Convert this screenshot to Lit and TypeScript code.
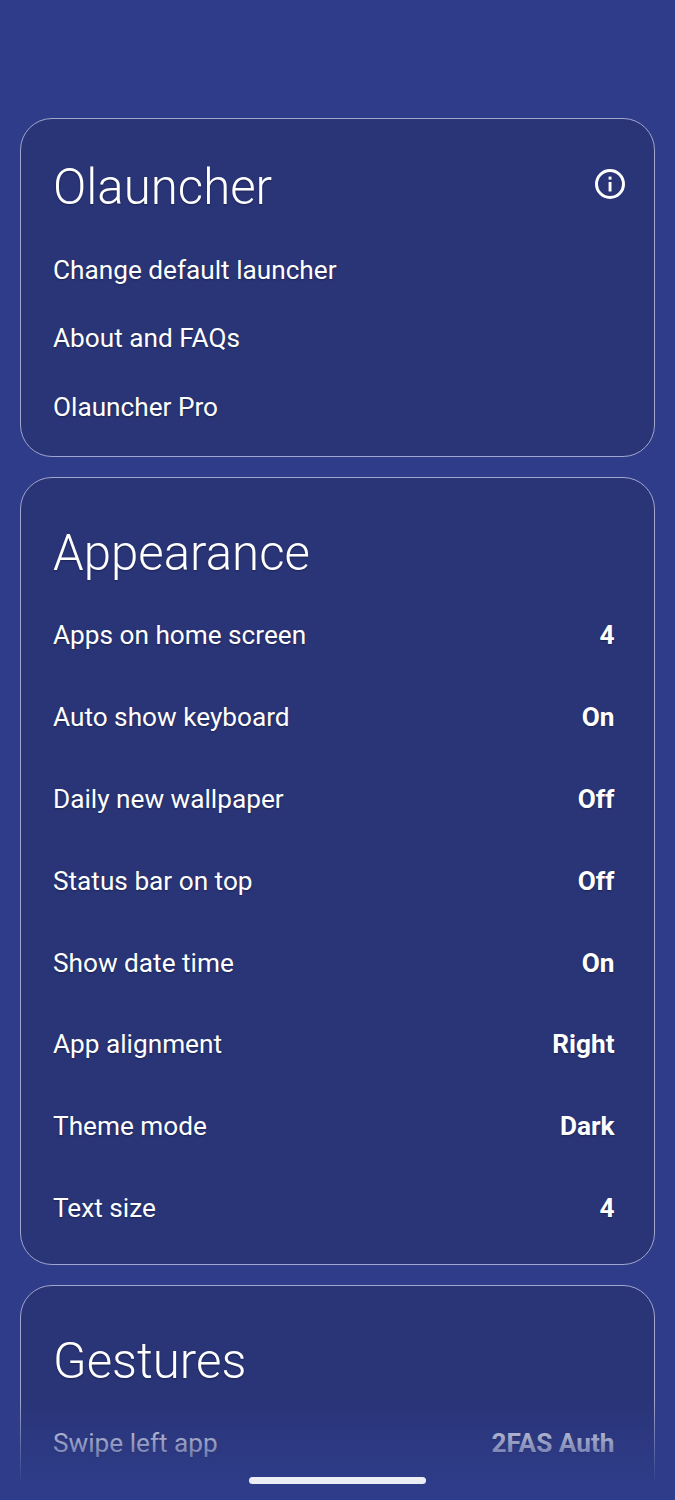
import { LitElement, html, css } from "lit";
import { customElement } from "lit/decorators.js";

const appearance: [string, string][] = [
  ["Apps on home screen", "4"],
  ["Auto show keyboard", "On"],
  ["Daily new wallpaper", "Off"],
  ["Status bar on top", "Off"],
  ["Show date time", "On"],
  ["App alignment", "Right"],
  ["Theme mode", "Dark"],
  ["Text size", "4"],
];

@customElement("app-root")
export class AppRoot extends LitElement {
  static styles = css`
    :host {
      display: block;
      position: relative;
      width: 675px;
      height: 1500px;
      overflow: hidden;
      background: #2e3c89;
      font-family: Roboto, "Liberation Sans", sans-serif;
      color: #fff;
      --shadow: 0 1px 2px rgba(0, 0, 0, 0.35);
    }
    .page {
      display: flex;
      flex-direction: column;
      gap: 20px;
      padding: 118px 20px 0;
    }
    .card {
      box-sizing: border-box;
      border: 1.5px solid #a0a6ce;
      border-radius: 32px;
      background: #2a3578;
      padding: 0 39.5px 0 32px;
      text-shadow: var(--shadow);
    }
    .card.first { height: 339px; }
    .card.second { height: 788px; }
    .card.third { height: 300px; }
    .head {
      display: flex;
      justify-content: space-between;
      align-items: flex-start;
      box-sizing: border-box;
      height: 135.6px;
      padding-top: 40px;
    }
    .second .head, .third .head { padding-top: 47px; height: 142.2px; }
    h1 {
      margin: 0;
      font-weight: 300;
      font-size: 49.2px;
      line-height: 56px;
    }
    svg { margin: 9px -11px 0 0; display: block; }
    .links { display: flex; flex-direction: column; }
    .link {
      font-size: 26.2px;
      line-height: 30px;
      height: 68.6px;
    }
    .row {
      display: flex;
      justify-content: space-between;
      font-size: 26.2px;
      line-height: 30px;
      height: 81.86px;
    }
    .row b { font-weight: 700; }
    .fade {
      position: absolute;
      left: 0;
      right: 0;
      bottom: 0;
      height: 100px;
      background: linear-gradient(to bottom, rgba(46, 60, 137, 0), #2e3c89 84%);
      pointer-events: none;
    }
    .pill {
      position: absolute;
      left: 249px;
      top: 1477px;
      width: 177px;
      height: 7px;
      border-radius: 4px;
      background: #eceef6;
    }
  `;

  render() {
    return html`
      <div class="page">
        <section class="card first">
          <div class="head">
            <h1>Olauncher</h1>
            <svg width="32" height="32" viewBox="0 0 32 32" fill="none">
              <circle cx="16" cy="16" r="13.5" stroke="#fff" stroke-width="3"></circle>
              <rect x="14.6" y="14" width="2.9" height="9.5" fill="#fff"></rect>
              <rect x="14.6" y="8.6" width="2.9" height="3" fill="#fff"></rect>
            </svg>
          </div>
          <div class="links">
            <div class="link">Change default launcher</div>
            <div class="link">About and FAQs</div>
            <div class="link">Olauncher Pro</div>
          </div>
        </section>
        <section class="card second">
          <div class="head"><h1>Appearance</h1></div>
          ${appearance.map(
            ([k, v]) => html`<div class="row"><span>${k}</span><b>${v}</b></div>`
          )}
        </section>
        <section class="card third">
          <div class="head"><h1>Gestures</h1></div>
          <div class="row"><span>Swipe left app</span><b>2FAS Auth</b></div>
        </section>
      </div>
      <div class="fade"></div>
      <div class="pill"></div>
    `;
  }
}
